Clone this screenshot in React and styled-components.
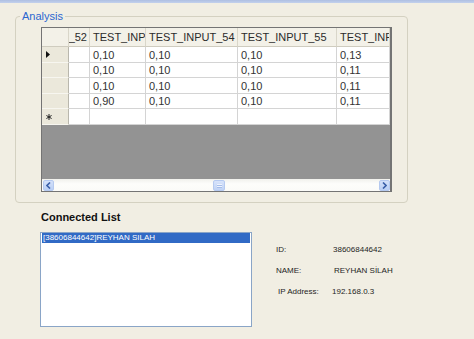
import React from "react";
import styled, { createGlobalStyle } from "styled-components";

const GlobalStyle = createGlobalStyle`
  html, body { margin: 0; padding: 0; background: #f1eee3; }
  body { font-family: "Liberation Sans", Arial, sans-serif; }
`;

const Page = styled.div`
  width: 474px;
  height: 339px;
  overflow: hidden;
  background: #f1eee3;
`;

const TopStrip = styled.div`
  height: 3px;
  background: linear-gradient(#aebfe2, #c3d1ec);
`;

const GroupBox = styled.fieldset`
  box-sizing: border-box;
  width: 393px;
  margin: 7px 0 0 15px;
  padding: 5px 4px 10px 4px;
  border: 1px solid #d4d1c1;
  border-radius: 4px;
  min-width: 0;
`;

const Caption = styled.legend`
  padding: 0 2px;
  font-size: 11px;
  line-height: 12px;
  color: #2a66d0;
`;

const COLS = "27px 21px 56px 92px 99px 1fr";

const Grid = styled.div`
  box-sizing: border-box;
  margin-left: 21px;
  width: 351px;
  height: 165px;
  border: 1px solid #747474;
  border-right-width: 2px;
  display: flex;
  flex-direction: column;
  background: #939393;
  overflow: hidden;
`;

const Row = styled.div`
  display: grid;
  grid-template-columns: ${COLS};
  height: ${(p) => p.$h}px;
  flex: none;
`;

const HeadCell = styled.div`
  box-sizing: border-box;
  display: flex;
  align-items: center;
  justify-content: ${(p) => (p.$end ? "flex-end" : "flex-start")};
  padding: ${(p) => (p.$end ? "0 2px 0 0" : "0 0 0 3px")};
  overflow: hidden;
  white-space: nowrap;
  font-size: 11px;
  color: #2b2b2b;
  background: #f3f1e8;
  border-right: 1px solid #d9d6c9;
  border-bottom: 1px solid #cfccbf;
`;

const HeadText = styled.span`
  flex: none;
`;

const RowHead = styled.div`
  box-sizing: border-box;
  display: flex;
  align-items: center;
  padding-left: 4px;
  background: #ebe8db;
  border-right: 1px solid #b9b7ad;
  border-bottom: 1px solid #f7f6f0;
`;

const Cell = styled.div`
  box-sizing: border-box;
  display: flex;
  align-items: center;
  padding-left: 3px;
  overflow: hidden;
  white-space: nowrap;
  font-size: 11px;
  color: #333;
  background: #fff;
  border-right: 1px solid #d4d4d4;
  border-bottom: 1px solid #d4d4d4;
`;

const Empty = styled.div`
  flex: 1;
  background: #939393;
`;

const HScroll = styled.div`
  flex: none;
  height: 12px;
  display: flex;
  align-items: center;
  background: linear-gradient(#f1f1ec, #fdfdfb 40%, #fbfbf8);
`;

const ScrollBtn = styled.div`
  box-sizing: border-box;
  width: 11px;
  height: 11px;
  margin: ${(p) => p.$m};
  border-radius: 2px;
  border: 1px solid #b5c9ef;
  background: linear-gradient(#d4e1f9, #bacff5);
  display: flex;
  align-items: center;
  justify-content: center;
`;

const Track = styled.div`
  flex: 1;
  display: flex;
  align-items: center;
  padding-left: 159px;
`;

const Thumb = styled.div`
  box-sizing: border-box;
  width: 12px;
  height: 11px;
  border-radius: 2px;
  border: 1px solid #b6caf0;
  background: linear-gradient(#d7e3fa, #c0d3f6);
  display: flex;
  flex-direction: column;
  align-items: center;
  justify-content: center;
  gap: 1px;
`;

const Grip = styled.div`
  width: 5px;
  height: 1px;
  background: #eef3fd;
  box-shadow: 0 1px 0 #a6bde9;
`;

const Lower = styled.div`
  display: flex;
  padding-left: 40px;
  margin-top: 8px;
`;

const ListColumn = styled.div`
  display: flex;
  flex-direction: column;
`;

const Heading = styled.div`
  font-size: 11px;
  line-height: 13px;
  font-weight: bold;
  color: #111;
  margin: 0 0 8px 1px;
`;

const ListBox = styled.div`
  box-sizing: border-box;
  width: 212px;
  height: 95px;
  border: 1px solid #8aa5c7;
  background: #fff;
  padding: 0 1px;
`;

const ListItem = styled.div`
  height: 10px;
  line-height: 10px;
  font-size: 8px;
  padding-left: 1px;
  white-space: nowrap;
  color: ${(p) => (p.$selected ? "#fff" : "#000")};
  background: ${(p) => (p.$selected ? "#316ac5" : "transparent")};
`;

const Info = styled.div`
  margin-left: 24px;
  padding-top: 28px;
  display: grid;
  grid-template-columns: 56px auto;
  grid-auto-rows: 21px;
  align-items: center;
  font-size: 8px;
  color: #1e1e1e;
`;

const Label = styled.div`
  padding-left: ${(p) => p.$indent || 0}px;
`;

const Value = styled.div`
  padding-left: ${(p) => p.$indent || 0}px;
`;

const Arrow = () => (
  <svg width="4" height="7" viewBox="0 0 4 7">
    <polygon points="0,0 4,3.5 0,7" fill="#111" />
  </svg>
);

const Star = () => (
  <svg width="6" height="6" viewBox="0 0 6 6">
    <g stroke="#222" strokeWidth="1">
      <line x1="3" y1="0" x2="3" y2="6" />
      <line x1="0.4" y1="1.5" x2="5.6" y2="4.5" />
      <line x1="0.4" y1="4.5" x2="5.6" y2="1.5" />
    </g>
  </svg>
);

const Chevron = ({ dir }) => (
  <svg width="5" height="7" viewBox="0 0 5 7">
    <polyline
      points={dir === "left" ? "4,0.5 1,3.5 4,6.5" : "1,0.5 4,3.5 1,6.5"}
      fill="none"
      stroke="#3a5fa8"
      strokeWidth="1.6"
    />
  </svg>
);

const headers = [
  "TEST_INPUT_52",
  "TEST_INPUT_53",
  "TEST_INPUT_54",
  "TEST_INPUT_55",
  "TEST_INPUT_56",
];

const data = [
  ["", "0,10", "0,10", "0,10", "0,13"],
  ["", "0,10", "0,10", "0,10", "0,11"],
  ["", "0,10", "0,10", "0,10", "0,11"],
  ["", "0,90", "0,10", "0,10", "0,11"],
];

const heights = [16, 15, 16, 15, 16];

export default function App() {
  return (
    <Page>
      <GlobalStyle />
      <TopStrip />
      <GroupBox>
        <Caption>Analysis</Caption>
        <Grid>
          <Row $h={19}>
            <HeadCell />
            {headers.map((h, i) => (
              <HeadCell key={h} $end={i === 0}>
                <HeadText>{h}</HeadText>
              </HeadCell>
            ))}
          </Row>
          {data.map((r, ri) => (
            <Row key={ri} $h={heights[ri]}>
              <RowHead>{ri === 0 && <Arrow />}</RowHead>
              {r.map((v, ci) => (
                <Cell key={ci}>{v}</Cell>
              ))}
            </Row>
          ))}
          <Row $h={heights[4]}>
            <RowHead>
              <Star />
            </RowHead>
            {headers.map((h) => (
              <Cell key={h} />
            ))}
          </Row>
          <Empty />
          <HScroll>
            <ScrollBtn $m="0 0 0 1px">
              <Chevron dir="left" />
            </ScrollBtn>
            <Track>
              <Thumb>
                <Grip />
                <Grip />
              </Thumb>
            </Track>
            <ScrollBtn $m="0">
              <Chevron dir="right" />
            </ScrollBtn>
          </HScroll>
        </Grid>
      </GroupBox>
      <Lower>
        <ListColumn>
          <Heading>Connected List</Heading>
          <ListBox>
            <ListItem $selected>[38606844642]REYHAN SILAH</ListItem>
          </ListBox>
        </ListColumn>
        <Info>
          <Label>ID:</Label>
          <Value $indent={1}>38606844642</Value>
          <Label>NAME:</Label>
          <Value $indent={2}>REYHAN SİLAH</Value>
          <Label $indent={2}>IP Address:</Label>
          <Value>192.168.0.3</Value>
        </Info>
      </Lower>
    </Page>
  );
}
